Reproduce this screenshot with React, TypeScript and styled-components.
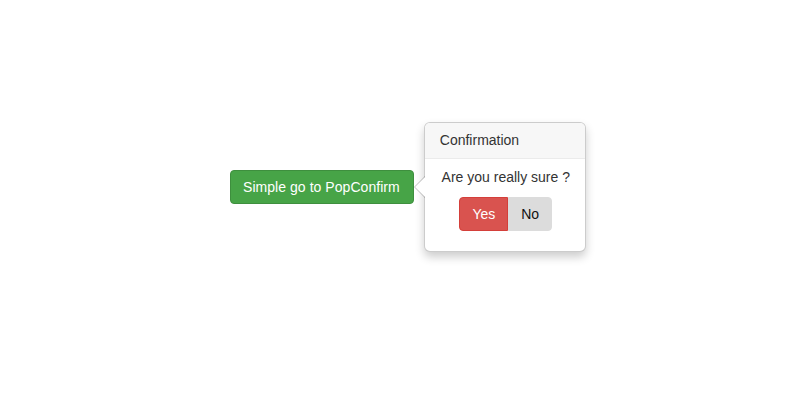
import styled, { createGlobalStyle } from 'styled-components';

const GlobalStyle = createGlobalStyle`
  body {
    margin: 0;
    background: #fff;
    font-family: "Liberation Sans", Arial, sans-serif;
    font-size: 14px;
    line-height: 1.42857;
    color: #333;
  }
`;

const Stage = styled.div`
  height: 374px;
  display: flex;
  align-items: center;
  padding-left: 230px;
  gap: 10px;
`;

const Button = styled.button<{ $variant: 'success' | 'danger' | 'default' }>`
  font-family: inherit;
  font-size: 14px;
  line-height: 20px;
  padding: 6px 12px;
  border: 1px solid;
  border-radius: 4px;
  cursor: pointer;
  color: ${(p) => (p.$variant === 'default' ? '#111' : '#fff')};
  background: ${(p) =>
    p.$variant === 'success' ? '#47a447' : p.$variant === 'danger' ? '#d9534f' : '#dcdcdc'};
  border-color: ${(p) =>
    p.$variant === 'success' ? '#3e8f3e' : p.$variant === 'danger' ? '#d43f3a' : '#dcdcdc'};
`;

const Trigger = styled(Button)`
  padding: 6px 13px 6px 12px;
  letter-spacing: 0.05px;
`;

const Popover = styled.div`
  position: relative;
  width: 160px;
  background: #fff;
  border: 1px solid rgba(0, 0, 0, 0.2);
  border-radius: 6px;
  box-shadow: 0 5px 10px rgba(0, 0, 0, 0.2);

  &::before,
  &::after {
    content: '';
    position: absolute;
    top: 50%;
    border-style: solid;
    border-color: transparent;
  }
  &::before {
    left: -11px;
    margin-top: -11px;
    border-width: 11px 11px 11px 0;
    border-right-color: rgba(0, 0, 0, 0.25);
  }
  &::after {
    left: -10px;
    margin-top: -10px;
    border-width: 10px 10px 10px 0;
    border-right-color: #fff;
  }
`;

const Title = styled.div`
  padding: 8px 14px 7px 15px;
  background: #f7f7f7;
  border-bottom: 1px solid #ebebeb;
  border-radius: 5px 5px 0 0;
`;

const Content = styled.div`
  padding: 9px 14px 20px 16px;
  text-align: center;
`;

const Actions = styled.div`
  display: flex;
  justify-content: center;
  margin-top: 10px;

  & > button:first-child {
    border-top-right-radius: 0;
    border-bottom-right-radius: 0;
  }
  & > button:last-child {
    border-top-left-radius: 0;
    border-bottom-left-radius: 0;
  }
`;

export default function App() {
  return (
    <>
      <GlobalStyle />
      <Stage>
        <Trigger $variant="success">Simple go to PopConfirm</Trigger>
        <Popover>
          <Title>Confirmation</Title>
          <Content>
            <div>Are you really sure ?</div>
            <Actions>
              <Button $variant="danger">Yes</Button>
              <Button $variant="default">No</Button>
            </Actions>
          </Content>
        </Popover>
      </Stage>
    </>
  );
}
